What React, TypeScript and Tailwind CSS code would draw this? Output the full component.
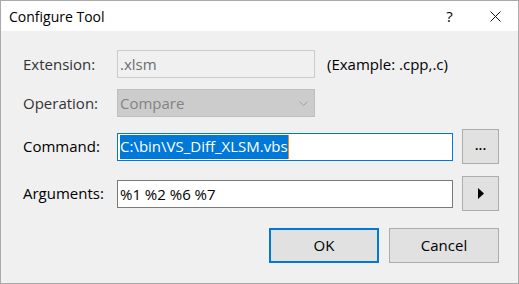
import { useState } from 'react';

const FONT = "font-['Open_Sans','Noto_Sans',sans-serif]";

export default function App() {
  const [args, setArgs] = useState('%1 %2 %6 %7');

  return (
    <div className={`w-[519px] h-[284px] flex flex-col border border-[#aaaaaa] bg-[#f0f0f0] text-black ${FONT}`}>
      {/* title bar */}
      <div className="h-[30px] shrink-0 bg-white flex items-center pl-[8px]">
        <span className="text-[14px] flex-1">Configure Tool</span>
        <span className="w-[46px] text-center text-[15px] mr-[1px] pl-[3px]">?</span>
        <span className="w-[46px] h-[30px] flex items-center justify-center">
          <svg width="11" height="11" viewBox="0 0 11 11" stroke="#111" strokeWidth="1">
            <path d="M0.5 0.5 L10.5 10.5 M10.5 0.5 L0.5 10.5" />
          </svg>
        </span>
      </div>

      <div className="flex-1 flex flex-col pl-[22px] pr-[19px] pt-[19px] text-[15px]">
        {/* Extension */}
        <div className="flex items-center h-[28px]">
          <span className="w-[94px] text-[#333]">Extension:</span>
          <div className="w-[198px] h-[28px] border border-[#cccccc] bg-[#f0f0f0] flex items-center px-[2px] text-[#6d6d6d]">
            .xlsm
          </div>
          <span className="ml-[12px]">(Example: .cpp,.c)</span>
        </div>

        {/* Operation */}
        <div className="flex items-center h-[28px] mt-[11px]">
          <span className="w-[94px] text-[#333]">Operation:</span>
          <div className="w-[198px] h-[28px] border border-[#bfbfbf] bg-[#cccccc] flex items-center px-[2px] text-[#838383]">
            <span className="flex-1">Compare</span>
            <svg width="9" height="5" viewBox="0 0 9 5" fill="none" stroke="#a0a0a0" strokeWidth="1" className="mr-[4px]">
              <path d="M0.5 0.5 L4.5 4.5 L8.5 0.5" />
            </svg>
          </div>
        </div>

        {/* Command */}
        <div className="flex items-center h-[35px] mt-[12px]">
          <span className="w-[94px]">Command:</span>
          <div className="w-[336px] h-[28px] border border-[#0078d7] bg-white flex items-center px-[2px]">
            <span className="bg-[#0078d7] text-white h-[24px] flex items-center leading-none">C:\bin\VS_Diff_XLSM.vbs</span>
            <span className="w-[1px] h-[24px] bg-[#f08a24]" />
          </div>
          <button className="ml-[9px] w-[37px] h-[35px] border border-[#adadad] bg-[#e1e1e1] flex items-center justify-center text-[14px] font-semibold leading-none pb-[4px]">
            ...
          </button>
        </div>

        {/* Arguments */}
        <div className="flex items-center h-[35px] mt-[12px]">
          <span className="w-[94px]">Arguments:</span>
          <input
            value={args}
            onChange={(e) => setArgs(e.target.value)}
            className="w-[336px] h-[28px] border border-[#7a7a7a] bg-white px-[2px] outline-none"
          />
          <button className="ml-[9px] w-[37px] h-[35px] border border-[#adadad] bg-[#e1e1e1] flex items-center justify-center">
            <svg width="6" height="11" viewBox="0 0 6 11">
              <path d="M0 0 L6 5.5 L0 11 Z" fill="#000" />
            </svg>
          </button>
        </div>

        {/* buttons */}
        <div className="flex justify-end gap-[10px] mt-[17px]">
          <button className="w-[110px] h-[35px] border-2 border-[#0078d7] bg-[#e1e1e1]">OK</button>
          <button className="w-[110px] h-[35px] border border-[#adadad] bg-[#e1e1e1]">Cancel</button>
        </div>
      </div>
    </div>
  );
}
